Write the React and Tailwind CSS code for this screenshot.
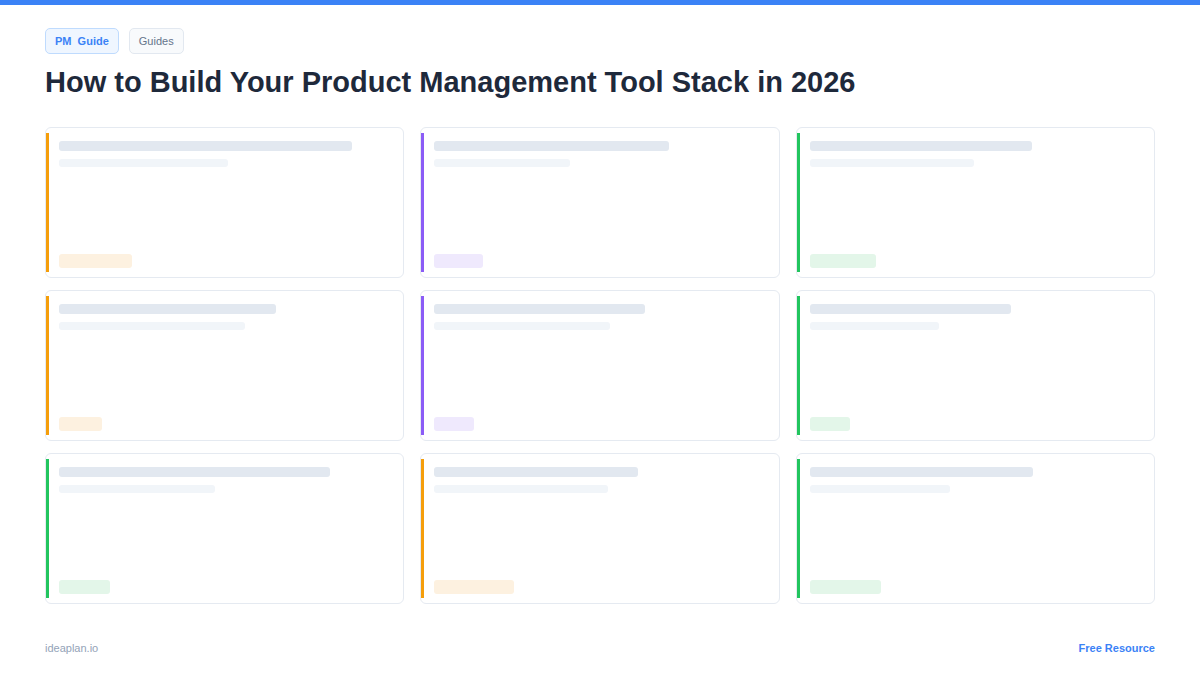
const cards = [
  { c: "bg-[#f59e0b]", p: "bg-[#fdf1e0]", a: 293, b: 169, w: 73 },
  { c: "bg-[#8b5cf6]", p: "bg-[#efe9fd]", a: 235, b: 136, w: 49 },
  { c: "bg-[#22c55e]", p: "bg-[#e3f6e9]", a: 222, b: 164, w: 66 },
  { c: "bg-[#f59e0b]", p: "bg-[#fdf1e0]", a: 217, b: 186, w: 43 },
  { c: "bg-[#8b5cf6]", p: "bg-[#efe9fd]", a: 211, b: 176, w: 40 },
  { c: "bg-[#22c55e]", p: "bg-[#e3f6e9]", a: 201, b: 129, w: 40 },
  { c: "bg-[#22c55e]", p: "bg-[#e3f6e9]", a: 271, b: 156, w: 51 },
  { c: "bg-[#f59e0b]", p: "bg-[#fdf1e0]", a: 204, b: 174, w: 80 },
  { c: "bg-[#22c55e]", p: "bg-[#e3f6e9]", a: 223, b: 140, w: 71 },
];

export default function App() {
  return (
    <div className="w-[1200px] h-[675px] bg-white flex flex-col" style={{ fontFamily: '"Liberation Sans", Arial, sans-serif' }}>
      <div className="h-[5px] bg-[#3b82f6]" />
      <div className="px-[45px] pt-[23px] flex flex-col flex-1">
        <div className="flex gap-[10px]">
          <span className="h-[26px] px-[9px] flex items-center rounded-[5px] border border-[#bfdbfe] bg-[#eff6ff] text-[#3b82f6] text-[11px] font-bold">PM&nbsp; Guide</span>
          <span className="h-[26px] px-[9px] flex items-center rounded-[5px] border border-[#e2e8f0] bg-[#f8fafc] text-[#64748b] text-[11px]">Guides</span>
        </div>
        <h1 className="mt-[11px] text-[29px] leading-[34px] font-bold text-[#1e293b]">How to Build Your Product Management Tool Stack in 2026</h1>
        <div className="mt-[28px] grid grid-cols-3 gap-x-[16px] gap-y-[12px]">
          {cards.map((k, i) => (
            <div key={i} className="h-[151px] border border-[#e5eaf1] rounded-[6px] py-[5px] flex">
              <div className={`w-[3px] ${k.c}`} />
              <div className="flex-1 pl-[10px] pt-[8px] pb-[4px] flex flex-col">
                <div className="h-[10px] rounded-[3px] bg-[#e2e8f0]" style={{ width: k.a }} />
                <div className="mt-[8px] h-[8px] rounded-[3px] bg-[#f1f5f9]" style={{ width: k.b }} />
                <div className={`mt-auto h-[14px] rounded-[3px] ${k.p}`} style={{ width: k.w }} />
              </div>
            </div>
          ))}
        </div>
        <div className="mt-auto mb-[19px] flex justify-between items-center text-[11px]">
          <span className="text-[#94a3b8]">ideaplan.io</span>
          <span className="text-[#3b82f6] font-bold">Free Resource</span>
        </div>
      </div>
    </div>
  );
}
